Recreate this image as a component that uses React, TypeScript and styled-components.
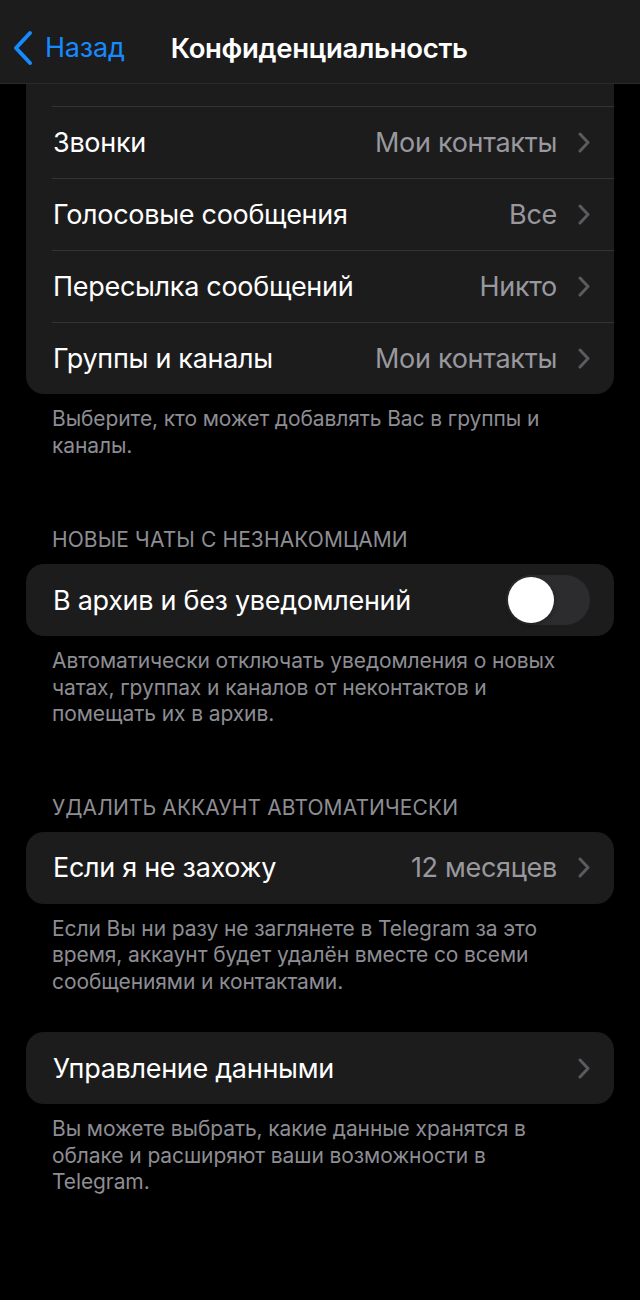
import React from "react";
import styled, { createGlobalStyle } from "styled-components";

const GlobalStyle = createGlobalStyle`
  html, body {
    margin: 0;
    padding: 0;
    background: #000;
  }
  body {
    font-family: Inter, "Noto Sans", "DejaVu Sans", sans-serif;
    -webkit-font-smoothing: antialiased;
  }
  * { box-sizing: border-box; }
`;

const Screen = styled.div`
  width: 640px;
  height: 1300px;
  background: #000;
  display: flex;
  flex-direction: column;
  overflow: hidden;
`;

const NavBar = styled.header`
  height: 84px;
  flex: none;
  background: #1c1c1d;
  border-bottom: 1px solid #2a2a2c;
  padding-top: 12px;
  display: flex;
  align-items: center;
`;

const BackButton = styled.button`
  display: flex;
  align-items: center;
  gap: 11px;
  background: none;
  border: none;
  padding: 0 0 0 12px;
  color: #168aff;
  font-family: inherit;
  font-size: 27px;
  letter-spacing: -0.2px;
  cursor: pointer;
`;

const Title = styled.h1`
  margin: 0 0 0 46px;
  color: #fff;
  font-size: 27.5px;
  font-weight: 600;
  letter-spacing: -0.3px;
`;

const Body = styled.main`
  flex: 1;
  overflow: hidden;
`;

const ScrollContent = styled.div`
  padding: 0 26px 40px;
`;

/* $scrolled: the top of the card has moved up under the navigation bar */
const Card = styled.section<{ $scrolled?: boolean }>`
  background: #1c1c1d;
  border-radius: ${(p) => (p.$scrolled ? "0 0 18px 18px" : "18px")};
  padding-top: ${(p) => (p.$scrolled ? "22px" : "0")};
  overflow: hidden;
`;

const Row = styled.div<{ $divider?: boolean }>`
  height: 72px;
  display: flex;
  align-items: center;
  padding: 0 24px 0 27px;
  position: relative;

  ${(p) =>
    p.$divider &&
    `
    &::before {
      content: "";
      position: absolute;
      top: 0;
      left: 26px;
      right: 0;
      height: 1px;
      background: #333336;
    }
  `}
`;

const Label = styled.span`
  flex: 1;
  color: #fff;
  font-size: 27px;
  letter-spacing: -0.3px;
  white-space: nowrap;
`;

const Value = styled.span`
  color: #98989e;
  font-size: 27px;
  letter-spacing: -0.3px;
  margin-right: 21px;
  white-space: nowrap;
`;

const Chevron = styled.svg`
  width: 12px;
  height: 21px;
  flex: none;
`;

const SectionHeader = styled.h2<{ $gap: number }>`
  margin: ${(p) => p.$gap}px 0 11px;
  padding: 0 26px;
  color: #8d8d93;
  font-size: 21px;
  font-weight: 400;
  line-height: 26px;
  text-transform: uppercase;
  letter-spacing: 0.1px;
`;

const Footer = styled.p`
  margin: 12px 0 0;
  padding: 0 40px 0 26px;
  color: #8d8d93;
  font-size: 21px;
  line-height: 26.5px;
  letter-spacing: -0.1px;
`;

const Spacer = styled.div<{ $h: number }>`
  height: ${(p) => p.$h}px;
`;

const SwitchTrack = styled.div<{ $on: boolean }>`
  width: 84px;
  height: 50px;
  border-radius: 25px;
  background: ${(p) => (p.$on ? "#30d158" : "#2c2c2e")};
  padding: 2px;
  display: flex;
  justify-content: ${(p) => (p.$on ? "flex-end" : "flex-start")};
  flex: none;
`;

const SwitchKnob = styled.div`
  width: 46px;
  height: 46px;
  border-radius: 50%;
  background: #fff;
  box-shadow: 0 2px 5px rgba(0, 0, 0, 0.3);
`;

const ChevronIcon = () => (
  <Chevron viewBox="0 0 12 21">
    <path
      d="M2 2l8 8.5L2 19"
      fill="none"
      stroke="#5b5b5f"
      strokeWidth="3"
      strokeLinecap="round"
      strokeLinejoin="round"
    />
  </Chevron>
);

const BackChevron = () => (
  <svg width="22" height="36" viewBox="0 0 22 36">
    <path
      d="M18 3L4 18l14 15"
      fill="none"
      stroke="#168aff"
      strokeWidth="4"
      strokeLinecap="round"
      strokeLinejoin="round"
    />
  </svg>
);

type Item = { label: string; value?: string };

const privacyItems: Item[] = [
  { label: "Звонки", value: "Мои контакты" },
  { label: "Голосовые сообщения", value: "Все" },
  { label: "Пересылка сообщений", value: "Никто" },
  { label: "Группы и каналы", value: "Мои контакты" },
];

const LinkRow = ({ item, divider }: { item: Item; divider?: boolean }) => (
  <Row $divider={divider}>
    <Label>{item.label}</Label>
    {item.value && <Value>{item.value}</Value>}
    <ChevronIcon />
  </Row>
);

export default function App() {
  return (
    <>
      <GlobalStyle />
      <Screen>
        <NavBar>
          <BackButton>
            <BackChevron />
            Назад
          </BackButton>
          <Title>Конфиденциальность</Title>
        </NavBar>
        <Body>
          <ScrollContent>
            <Card $scrolled>
              {privacyItems.map((item) => (
                <LinkRow key={item.label} item={item} divider />
              ))}
            </Card>
            <Footer>
              Выберите, кто может добавлять Вас в группы и каналы.
            </Footer>

            <SectionHeader $gap={68}>Новые чаты с незнакомцами</SectionHeader>
            <Card>
              <Row>
                <Label>В архив и без уведомлений</Label>
                <SwitchTrack $on={false}>
                  <SwitchKnob />
                </SwitchTrack>
              </Row>
            </Card>
            <Footer>
              Автоматически отключать уведомления о новых чатах, группах и
              каналов от неконтактов и помещать их в архив.
            </Footer>

            <SectionHeader $gap={67}>Удалить аккаунт автоматически</SectionHeader>
            <Card>
              <LinkRow item={{ label: "Если я не захожу", value: "12 месяцев" }} />
            </Card>
            <Footer>
              Если Вы ни разу не заглянете в Telegram за это время, аккаунт
              будет удалён вместе со всеми сообщениями и контактами.
            </Footer>

            <Spacer $h={37} />
            <Card>
              <LinkRow item={{ label: "Управление данными" }} />
            </Card>
            <Footer>
              Вы можете выбрать, какие данные хранятся в облаке и расширяют
              ваши возможности в Telegram.
            </Footer>
          </ScrollContent>
        </Body>
      </Screen>
    </>
  );
}
